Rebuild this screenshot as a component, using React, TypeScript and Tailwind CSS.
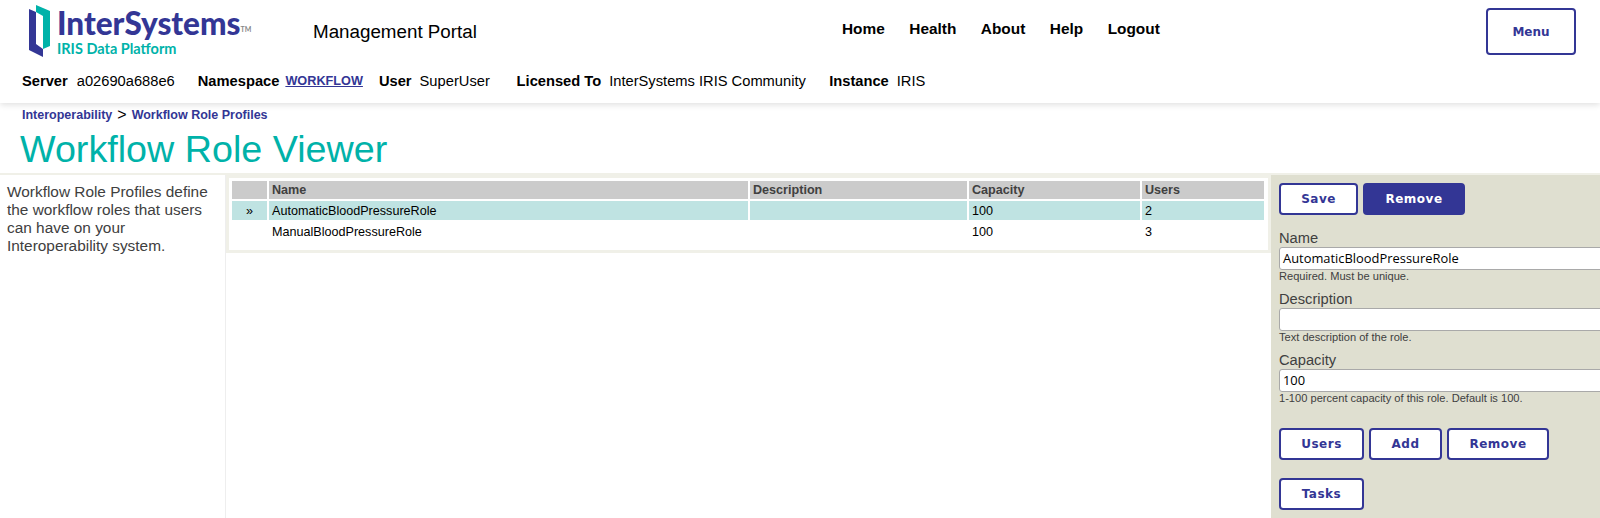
const NAVY = "text-[#333695]";

function Btn({ label, w, solid }: { label: string; w: string; solid?: boolean }) {
  return (
    <button
      className={`${w} h-[32px] rounded-[4px] border-2 border-[#333695] font-['DejaVu_Sans'] text-[12px] font-bold tracking-[0.5px] ${
        solid ? "bg-[#333695] text-white" : "bg-white text-[#333695]"
      }`}
    >
      {label}
    </button>
  );
}

function Field({ label, value, hint }: { label: string; value: string; hint: string }) {
  return (
    <div className="mb-[9px]">
      <div className="text-[14.7px] leading-[17px] text-[#404040]">{label}</div>
      <div className="h-[23px] w-[400px] rounded-[3px] border border-[#a9a9a9] bg-white pl-[3px] font-['Open_Sans'] text-[12.9px] leading-[21px] text-black">
        {value}
      </div>
      <div className="text-[11.1px] leading-[12px] text-[#404040]">{hint}</div>
    </div>
  );
}

const headCell = "h-[18px] bg-[#cbcbcb] px-[3px] py-0 text-left text-[12.6px] font-bold leading-[18px] text-[#404040]";
const cell = "h-[19px] px-[3px] pt-[1px] pb-0 text-[12.6px] leading-[18px] text-black";

export default function App() {
  return (
    <div className="h-[518px] w-[1600px] overflow-hidden bg-white font-['Liberation_Sans',Arial,sans-serif]">
      <header className="relative z-10 h-[103px] bg-white shadow-[0_2px_6px_rgba(0,0,0,0.12)]">
        <div className="flex h-[72px]">
          <div className="ml-[29px] flex w-[284px]">
            <svg width="22" height="53" viewBox="0 0 22 53" className="mt-[5px] shrink-0">
              <path d="M0 4 L7 7 V39 L14 44 V52 L0 45 Z" fill="#333695" />
              <path d="M7 0 L21 6 V41 L14 44 V11 L7 7 Z" fill="#00b2a9" />
            </svg>
            <div className="ml-[6px] mt-[6px]">
              <div className={`font-['Lato'] text-[31.5px] font-black leading-[35px] ${NAVY}`}>
                InterSystems<sup className="text-[7px] font-bold text-[#888]">TM</sup>
              </div>
              <div className="font-['Lato'] text-[14.5px] font-bold leading-[16px] text-[#00b2a9]">IRIS Data Platform</div>
            </div>
          </div>
          <div className="mt-[20px] w-[529px] text-[18.8px] leading-[24px] text-black">Management Portal</div>
          <nav className="mt-[18px] flex gap-[24.5px] text-[15.4px] font-bold leading-[22px] text-black">
            <span>Home</span>
            <span>Health</span>
            <span>About</span>
            <span>Help</span>
            <span>Logout</span>
          </nav>
          <div className="ml-auto mr-[24px] mt-[8px]">
            <button className="h-[47px] w-[90px] rounded-[4px] border-2 border-[#333695] bg-white font-['DejaVu_Sans'] text-[12px] font-bold text-[#333695]">
              Menu
            </button>
          </div>
        </div>
        <div className="flex pl-[22px] text-[14.7px] leading-[18px] text-black">
          <b className="mr-[9px]">Server</b>
          <span className="w-[121px]">a02690a688e6</span>
          <b className="mr-[6px]">Namespace</b>
          <span className="mr-[16px] text-[12.7px] font-bold text-[#333695] underline">WORKFLOW</span>
          <b className="mr-[8px]">User</b>
          <span className="w-[97px]">SuperUser</span>
          <b className="mr-[8px]">Licensed To</b>
          <span className="w-[220px]">InterSystems IRIS Community</span>
          <b className="mr-[8px]">Instance</b>
          <span>IRIS</span>
        </div>
      </header>

      <div className={`ml-[22px] flex h-[24px] items-center text-[12.5px] font-bold ${NAVY}`}>
        <span>Interoperability</span>
        <span className="mx-[5px] text-[16px] font-normal text-black">&gt;</span>
        <span>Workflow Role Profiles</span>
      </div>
      <h1 className="ml-[20px] h-[46px] text-[37.7px] leading-[45px] text-[#00b2a9]">Workflow Role Viewer</h1>

      <main className="flex h-[345px] border-t-[2px] border-[#f0f0e8]">
        <aside className="w-[226px] shrink-0 border-r border-[#eeeeee] pl-[7px] pr-[8px] pt-[8px] text-[15.4px] leading-[18px] text-[#404040]">
          Workflow Role Profiles define the workflow roles that users can have on your Interoperability system.
        </aside>
        <section className="w-[1045px] shrink-0">
          <div className="h-[78px] border-[3px] border-[#f0f0e8] bg-white pl-[1px] pr-[5px] pt-[1px]">
            <table className="w-[1036px] table-fixed border-separate border-spacing-[2px]">
              <colgroup>
                <col className="w-[35px]" />
                <col className="w-[479px]" />
                <col className="w-[217px]" />
                <col className="w-[171px]" />
                <col />
              </colgroup>
              <thead>
                <tr>
                  <th className={headCell}></th>
                  <th className={headCell}>Name</th>
                  <th className={headCell}>Description</th>
                  <th className={headCell}>Capacity</th>
                  <th className={headCell}>Users</th>
                </tr>
              </thead>
              <tbody>
                <tr className="bg-[#bfe3e2]">
                  <td className={`${cell} text-center`}>»</td>
                  <td className={cell}>AutomaticBloodPressureRole</td>
                  <td className={cell}></td>
                  <td className={cell}>100</td>
                  <td className={cell}>2</td>
                </tr>
                <tr>
                  <td className={cell}></td>
                  <td className={cell}>ManualBloodPressureRole</td>
                  <td className={cell}></td>
                  <td className={cell}>100</td>
                  <td className={cell}>3</td>
                </tr>
              </tbody>
            </table>
          </div>
        </section>
        <aside className="flex-1 overflow-hidden bg-[#dfdfd0] pl-[8px] pt-[8px]">
          <div className="flex gap-[5px]">
            <Btn label="Save" w="w-[79px]" />
            <Btn label="Remove" w="w-[102px]" solid />
          </div>
          <div className="mt-[15px]">
            <Field label="Name" value="AutomaticBloodPressureRole" hint="Required. Must be unique." />
            <Field label="Description" value="" hint="Text description of the role." />
            <Field label="Capacity" value="100" hint="1-100 percent capacity of this role. Default is 100." />
          </div>
          <div className="mt-[24px] flex gap-[5px]">
            <Btn label="Users" w="w-[85px]" />
            <Btn label="Add" w="w-[73px]" />
            <Btn label="Remove" w="w-[102px]" />
          </div>
          <div className="mt-[18px]">
            <Btn label="Tasks" w="w-[85px]" />
          </div>
        </aside>
      </main>
    </div>
  );
}
